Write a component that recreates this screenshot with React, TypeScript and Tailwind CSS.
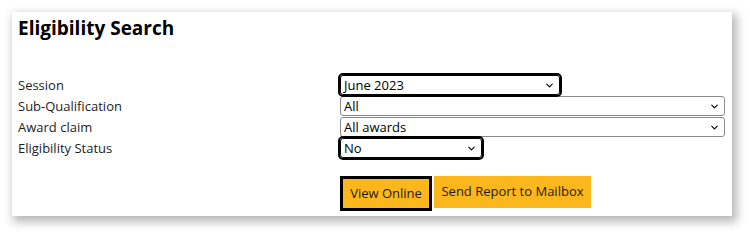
import {ChevronDown} from "lucide-react";

const font = {fontFamily: '"Open Sans", "Liberation Sans", sans-serif'};

type Field = {
	label: string;
	value: string;
	width: string;
	focused?: boolean;
};

const fields: Field[] = [
	{label: "Session", value: "June 2023", width: "w-[220px]", focused: true},
	{label: "Sub-Qualification", value: "All", width: "w-[385px]"},
	{label: "Award claim", value: "All awards", width: "w-[385px]"},
	{label: "Eligibility Status", value: "No", width: "w-[142px]", focused: true},
];

export default function App() {
	return (
		<div className="bg-white w-[750px] h-[237px] p-3" style={font}>
			<div className="bg-white w-[720px] h-[204px] pt-[3px] px-[6px] shadow-[3px_4px_9px_2px_rgba(0,0,0,0.28)]">
				<h1 className="text-[19px] leading-[26px] font-bold text-black">
					Eligibility Search
				</h1>

				<div className="mt-[34px] flex flex-col">
					{fields.map((f) => (
						<div key={f.label} className="flex items-start h-[21px]">
							<span className="w-[322px] text-[13px] leading-[20px] text-[#1c1c1c]">
								{f.label}
							</span>

							<div
								className={`relative h-[20px] ${f.width} border rounded-[3px] bg-white ${
									f.focused
										? "border-black outline-[2px] outline-solid outline-black z-10"
										: "border-[#8a8a8a]"
								}`}
							>
								<span className="absolute left-[3px] top-0 text-[13px] leading-[18px] text-black">
									{f.value}
								</span>
								<ChevronDown
									className="absolute right-[4px] top-[4px] w-[11px] h-[11px] text-black"
									strokeWidth={2.5}
								/>
							</div>
						</div>
					))}
				</div>

				<div className="flex items-start ml-[322px] mt-[17px] gap-[2px]">
					<button className="h-[35px] w-[92px] border-[3px] border-black bg-[#fcb71d] text-[13px] text-[#1c1c1c]">
						View Online
					</button>
					<button className="h-[32px] w-[157px] bg-[#fcb71d] text-[13px] text-[#1c1c1c]">
						Send Report to Mailbox
					</button>
				</div>
			</div>
		</div>
	);
}
